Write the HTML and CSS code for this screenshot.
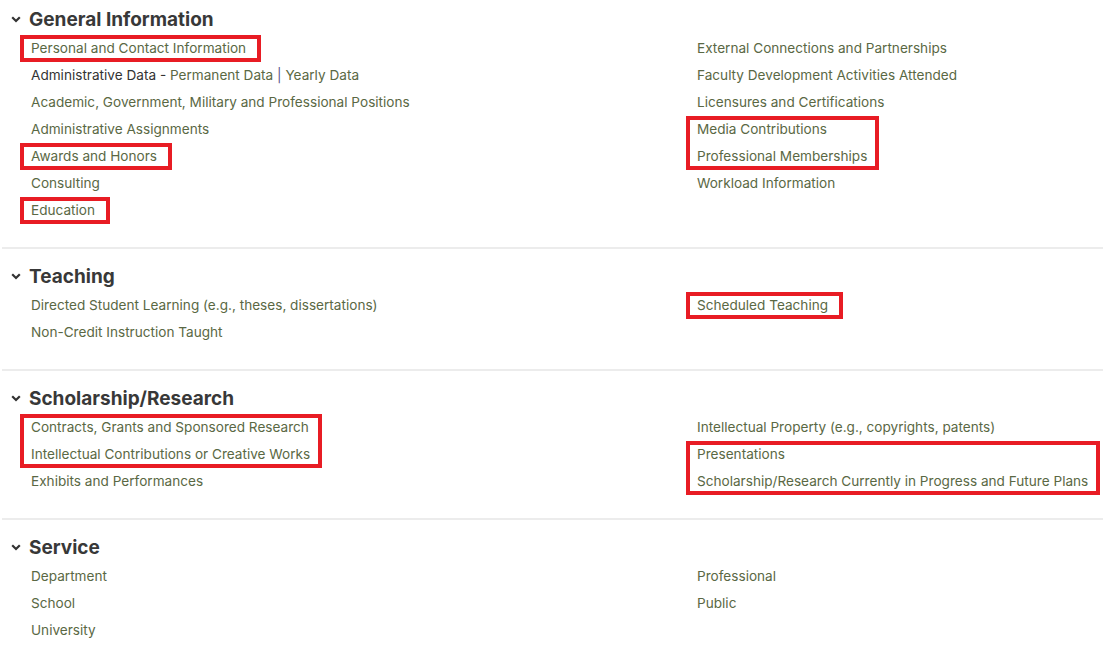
FILE: index.html
```html
<!DOCTYPE html>
<html lang="en">
<head>
  <meta charset="UTF-8">
  <title>Activities</title>
  <link rel="stylesheet" href="styles.css">
</head>
<body>
  <div class="secao">
    <h2><svg class="seta" viewBox="0 0 10 7" width="10" height="7"><path d="M1.2 1.2 L5 5 L8.8 1.2" fill="none" stroke="#333" stroke-width="2.2"/></svg>General Information</h2>
    <div class="colunas">
      <div class="coluna">
        <a class="item marcado">Personal and Contact Information</a>
        <span class="item texto">Administrative Data - <a>Permanent Data</a> <span class="sep">|</span> <a>Yearly Data</a></span>
        <a class="item">Academic, Government, Military and Professional Positions</a>
        <a class="item">Administrative Assignments</a>
        <a class="item marcado">Awards and Honors</a>
        <a class="item">Consulting</a>
        <a class="item marcado">Education</a>
      </div>
      <div class="coluna">
        <a class="item">External Connections and Partnerships</a>
        <a class="item">Faculty Development Activities Attended</a>
        <a class="item">Licensures and Certifications</a>
        <div class="grupo">
          <a class="item">Media Contributions</a>
          <a class="item">Professional Memberships</a>
        </div>
        <a class="item">Workload Information</a>
      </div>
    </div>
  </div>

  <div class="secao">
    <h2><svg class="seta" viewBox="0 0 10 7" width="10" height="7"><path d="M1.2 1.2 L5 5 L8.8 1.2" fill="none" stroke="#333" stroke-width="2.2"/></svg>Teaching</h2>
    <div class="colunas">
      <div class="coluna">
        <a class="item">Directed Student Learning (e.g., theses, dissertations)</a>
        <a class="item">Non-Credit Instruction Taught</a>
      </div>
      <div class="coluna">
        <a class="item marcado">Scheduled Teaching</a>
      </div>
    </div>
  </div>

  <div class="secao">
    <h2><svg class="seta" viewBox="0 0 10 7" width="10" height="7"><path d="M1.2 1.2 L5 5 L8.8 1.2" fill="none" stroke="#333" stroke-width="2.2"/></svg>Scholarship/Research</h2>
    <div class="colunas">
      <div class="coluna">
        <div class="grupo">
          <a class="item">Contracts, Grants and Sponsored Research</a>
          <a class="item">Intellectual Contributions or Creative Works</a>
        </div>
        <a class="item">Exhibits and Performances</a>
      </div>
      <div class="coluna">
        <a class="item">Intellectual Property (e.g., copyrights, patents)</a>
        <div class="grupo">
          <a class="item">Presentations</a>
          <a class="item">Scholarship/Research Currently in Progress and Future Plans</a>
        </div>
      </div>
    </div>
  </div>

  <div class="secao">
    <h2><svg class="seta" viewBox="0 0 10 7" width="10" height="7"><path d="M1.2 1.2 L5 5 L8.8 1.2" fill="none" stroke="#333" stroke-width="2.2"/></svg>Service</h2>
    <div class="colunas">
      <div class="coluna">
        <a class="item">Department</a>
        <a class="item">School</a>
        <a class="item">University</a>
      </div>
      <div class="coluna">
        <a class="item">Professional</a>
        <a class="item">Public</a>
      </div>
    </div>
  </div>
</body>
</html>
```

FILE: styles.css
```css
body {
  font-family: Inter, 'Noto Sans', sans-serif;
  background: #fff;
  margin: 0;
  color: #333;
}
.secao {
  padding: 12px 0 23px;
  margin-left: 2px;
  border-bottom: 2px solid #ececec;
}
.secao:first-child {
  padding-top: 4px;
}
.secao:last-child {
  border-bottom: none;
}
h2 {
  display: flex;
  align-items: center;
  height: 30px;
  margin: 0 0 1px;
  padding-left: 9px;
  font-size: 19px;
  font-weight: 700;
  color: #383838;
}
.seta {
  margin-right: 8px;
  margin-top: 1px;
}
.colunas {
  display: grid;
  grid-template-columns: 666px 1fr;
  padding-left: 29px;
}
.coluna {
  display: flex;
  flex-direction: column;
  align-items: flex-start;
}
.item {
  display: block;
  height: 27px;
  line-height: 27px;
  font-size: 13.6px;
  color: #5a6844;
  text-decoration: none;
  white-space: nowrap;
}
.item a {
  color: #5a6844;
}
.item.texto {
  color: #333;
}
.sep {
  color: #5c5488;
}
.marcado, .grupo {
  margin-left: -11px;
  padding: 0 12px 0 11px;
  box-shadow: inset 0 0 0 4px #e81c24;
}
.marcado {
  padding-right: 15px;
}
.grupo {
  display: flex;
  flex-direction: column;
}
```
